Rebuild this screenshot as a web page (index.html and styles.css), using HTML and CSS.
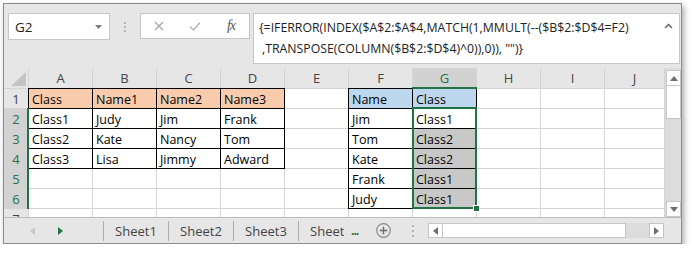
FILE: index.html
```html
<!DOCTYPE html>
<html lang="en">
<head>
  <meta charset="UTF-8">
  <title>Lookup Class</title>
  <link rel="stylesheet" href="styles.css">
</head>
<body>

  <div class="window">

    <div class="formula-bar">
      <div class="name-box">
        <span>G2</span>
        <svg width="7" height="4" viewBox="0 0 7 4"><polygon points="0,0 7,0 3.5,4" fill="#7a7a7a"/></svg>
      </div>
      <div class="grip"><i></i><i></i><i></i></div>
      <div class="fx-buttons">
        <span class="fx-btn">
          <svg width="10" height="10" viewBox="0 0 10 10"><path d="M1 1 L9 9 M9 1 L1 9" stroke="#a6a6a6" stroke-width="1.3" fill="none"/></svg>
        </span>
        <span class="fx-btn">
          <svg width="12" height="10" viewBox="0 0 12 10"><path d="M1 5.5 L4.5 9 L11 1.5" stroke="#b4b4b4" stroke-width="1.4" fill="none"/></svg>
        </span>
        <span class="fx-btn fx">fx</span>
      </div>
      <div class="formula">
        {=IFERROR(INDEX($A$2:$A$4,MATCH(1,MMULT(--($B$2:$D$4=F2)<br>
        <span class="indent">,TRANSPOSE(COLUMN($B$2:$D$4)^0)),0)), "")}</span>
        <svg class="collapse" width="9" height="6" viewBox="0 0 9 6"><path d="M1 5 L4.5 1.5 L8 5" stroke="#666" stroke-width="1.5" fill="none"/></svg>
      </div>
    </div>

    <div class="sheet">
      <div class="grid" id="grid">
        <!-- header + cells are built below -->
      </div>
      <div class="vscroll">
        <div class="sbtn">
          <svg width="8" height="5" viewBox="0 0 8 5"><polygon points="0,5 8,5 4,0" fill="#6e6e6e"/></svg>
        </div>
        <div class="vthumb"></div>
        <div class="vspace"></div>
        <div class="sbtn">
          <svg width="8" height="5" viewBox="0 0 8 5"><polygon points="0,0 8,0 4,5" fill="#6e6e6e"/></svg>
        </div>
      </div>
      <div class="col-mark"></div>
      <div class="row-mark"></div>
      <div class="selection"></div>
      <div class="fill-handle"></div>
    </div>

    <div class="tab-bar">
      <div class="nav">
        <svg width="5" height="8" viewBox="0 0 5 8"><polygon points="5,0 5,8 0,4" fill="#c8c8c8"/></svg>
        <svg width="5" height="8" viewBox="0 0 5 8"><polygon points="0,0 0,8 5,4" fill="#217346"/></svg>
      </div>
      <div class="sep"></div>
      <div class="tabs">
        <div class="tab">Sheet1</div>
        <div class="sep"></div>
        <div class="tab">Sheet2</div>
        <div class="sep"></div>
        <div class="tab">Sheet3</div>
        <div class="sep"></div>
        <div class="tab">Sheet4</div>
      </div>
      <div class="more">...</div>
      <div class="add">
        <svg width="15" height="15" viewBox="0 0 15 15">
          <circle cx="7.5" cy="7.5" r="6.8" stroke="#8a8a8a" stroke-width="1.2" fill="none"/>
          <path d="M7.5 3.8 V11.2 M3.8 7.5 H11.2" stroke="#6a6a6a" stroke-width="1.4"/>
        </svg>
      </div>
      <div class="grip small"><i></i><i></i><i></i></div>
      <div class="hscroll">
        <div class="sbtn">
          <svg width="5" height="8" viewBox="0 0 5 8"><polygon points="5,0 5,8 0,4" fill="#6e6e6e"/></svg>
        </div>
        <div class="hthumb"></div>
        <div class="hspace"></div>
        <div class="sbtn">
          <svg width="5" height="8" viewBox="0 0 5 8"><polygon points="0,0 0,8 5,4" fill="#6e6e6e"/></svg>
        </div>
      </div>
    </div>

  </div>

  <script>
    const cols = ["A", "B", "C", "D", "E", "F", "G", "H", "I", "J"];
    const rows = [
      ["Class", "Name1", "Name2", "Name3", "", "Name", "Class"],
      ["Class1", "Judy", "Jim", "Frank", "", "Jim", "Class1"],
      ["Class2", "Kate", "Nancy", "Tom", "", "Tom", "Class2"],
      ["Class3", "Lisa", "Jimmy", "Adward", "", "Kate", "Class2"],
      ["", "", "", "", "", "Frank", "Class1"],
      ["", "", "", "", "", "Judy", "Class1"],
      []
    ];

    function cellClass(r, c) {
      let cls = "cell";
      if ((r <= 4 && c <= 3) || (r <= 6 && (c === 5 || c === 6))) cls += " boxed";
      if (r === 1 && c <= 3) cls += " peach";
      if (r === 1 && (c === 5 || c === 6)) cls += " blue";
      if (c === 6 && r >= 3 && r <= 6) cls += " selected";
      return cls;
    }

    function renderGrid() {
      const grid = document.getElementById("grid");
      let html = `<div class="corner"><svg width="15" height="14" viewBox="0 0 15 14"><polygon points="15,0 15,14 0,14" fill="#c4c4c4"/></svg></div>`;
      cols.forEach((col, c) => {
        html += `<div class="colhead${c === 6 ? " active" : ""}">${col}</div>`;
      });
      rows.forEach((row, i) => {
        const r = i + 1;
        html += `<div class="rowhead${r >= 2 && r <= 6 ? " active" : ""}">${r}</div>`;
        cols.forEach((col, c) => {
          html += `<div class="${cellClass(r, c)}">${row[c] || ""}</div>`;
        });
      });
      grid.innerHTML = html;
    }

    renderGrid();
  </script>

</body>
</html>
```

FILE: styles.css
```css
body {
  margin: 0;
  background-color: #fff;
  font-family: "Open Sans", "Noto Sans", sans-serif;
  color: #222;
}

.window {
  margin: 3px 0 0 3px;
  width: 677px;
  height: 239px;
  border: 1px solid #8c8c8c;
  background-color: #e6e6e6;
  box-shadow: 2px 3px 6px rgba(0, 0, 0, 0.35);
  display: flex;
  flex-direction: column;
  overflow: hidden;
}

/* formula bar */

.formula-bar {
  height: 64px;
  flex-shrink: 0;
  display: flex;
  align-items: flex-start;
  padding-top: 9px;
  box-sizing: border-box;
}

.name-box {
  margin-left: 4px;
  width: 102px;
  height: 27px;
  box-sizing: border-box;
  border: 1px solid #c6c6c6;
  background-color: #fff;
  display: flex;
  align-items: center;
  justify-content: space-between;
  padding: 0 7px 0 6px;
  font-size: 13.5px;
}

.grip {
  width: 30px;
  height: 27px;
  display: flex;
  flex-direction: column;
  align-items: center;
  justify-content: center;
  gap: 2px;
}

.grip i {
  width: 2px;
  height: 2px;
  background-color: #b4b4b4;
}

.fx-buttons {
  width: 110px;
  height: 26px;
  box-sizing: border-box;
  border: 1px solid #c6c6c6;
  background-color: #fff;
  display: flex;
  align-items: center;
}

.fx-btn {
  width: 36px;
  display: flex;
  justify-content: center;
}

.fx-btn.fx {
  font-family: "Liberation Serif", serif;
  font-style: italic;
  font-size: 14px;
  color: #555;
  letter-spacing: -1px;
}

.formula {
  position: relative;
  margin-left: 3px;
  width: 427px;
  height: 51px;
  box-sizing: border-box;
  border: 1px solid #c6c6c6;
  background-color: #fff;
  padding: 3px 0 0 5px;
  font-size: 12.3px;
  line-height: 21px;
  white-space: nowrap;
  color: #222;
}

.formula .indent {
  padding-left: 3px;
}

.collapse {
  position: absolute;
  right: 6px;
  top: 9px;
}

/* sheet */

.sheet {
  position: relative;
  height: 149px;
  flex-shrink: 0;
  display: flex;
}

.grid {
  width: 660px;
  height: 149px;
  border-right: 1px solid #d4d4d4;
  display: grid;
  grid-template-columns: 24px repeat(9, 63px) 59px;
  grid-template-rows: 20px repeat(7, 19px);
  gap: 1px;
  background-color: #d4d4d4;
  overflow: hidden;
}

.corner {
  background-color: #e6e6e6;
  display: flex;
  align-items: flex-end;
  justify-content: flex-end;
  padding: 0 2px 2px 0;
}

.colhead, .rowhead {
  background-color: #e6e6e6;
  color: #444;
  font-size: 13px;
  display: flex;
  align-items: center;
  justify-content: center;
}

.colhead.active, .rowhead.active {
  background-color: #d2d2d2;
  color: #217346;
}

.cell {
  background-color: #fff;
  color: #000;
  font-size: 12.5px;
  line-height: 17px;
  padding: 0 3px;
  display: flex;
  align-items: flex-end;
  white-space: nowrap;
}

.cell.boxed {
  outline: 1px solid #000;
}

.cell.peach {
  background-color: #f8cbad;
}

.cell.blue {
  background-color: #bdd7ee;
}

.cell.selected {
  background-color: #c8c8c8;
}

.selection {
  position: absolute;
  left: 408px;
  top: 39px;
  width: 65px;
  height: 102px;
  box-sizing: border-box;
  border: 2px solid #217346;
}

.fill-handle {
  position: absolute;
  left: 469px;
  top: 137px;
  width: 5px;
  height: 5px;
  background-color: #217346;
  border: 1px solid #fff;
}

.col-mark {
  position: absolute;
  left: 408px;
  top: 19px;
  width: 65px;
  height: 2px;
  background-color: #217346;
}

.row-mark {
  position: absolute;
  left: 23px;
  top: 40px;
  width: 2px;
  height: 101px;
  background-color: #217346;
}

/* scroll bars */

.vscroll {
  width: 16px;
  display: flex;
  flex-direction: column;
  padding: 2px 0 0 1px;
  box-sizing: border-box;
  background-color: #dcdcdc;
}

.sbtn {
  width: 15px;
  height: 16px;
  box-sizing: border-box;
  border: 1px solid #c6c6c6;
  background-color: #fff;
  display: flex;
  align-items: center;
  justify-content: center;
  flex-shrink: 0;
}

.vthumb {
  width: 15px;
  height: 33px;
  box-sizing: border-box;
  border: 1px solid #c6c6c6;
  border-top: none;
  background-color: #fff;
}

.vspace, .hspace {
  flex: 1;
}

/* sheet tabs */

.tab-bar {
  height: 26px;
  flex-shrink: 0;
  border-top: 1px solid #bdbdbd;
  box-sizing: border-box;
  display: flex;
  align-items: center;
}

.nav {
  width: 99px;
  display: flex;
  gap: 23px;
  padding-left: 26px;
  box-sizing: border-box;
}

.sep {
  width: 1px;
  height: 20px;
  background-color: #acacac;
  flex-shrink: 0;
}

.tabs {
  width: 240px;
  display: flex;
  align-items: center;
  overflow: hidden;
  flex-shrink: 0;
}

.tab {
  width: 64px;
  flex-shrink: 0;
  text-align: center;
  font-size: 13px;
  color: #444;
}

.more {
  margin-left: 7px;
  width: 12px;
  color: #217346;
  font-weight: bold;
  font-size: 12px;
  letter-spacing: -1px;
}

.add {
  margin-left: 13px;
  display: flex;
}

.grip.small {
  margin-left: 21px;
  width: 2px;
  height: 14px;
  gap: 3px;
}

.hscroll {
  margin-left: 14px;
  width: 236px;
  height: 15px;
  display: flex;
  background-color: #dcdcdc;
}

.hscroll .sbtn {
  width: 15px;
  height: 15px;
}

.hthumb {
  width: 183px;
  height: 15px;
  box-sizing: border-box;
  border: 1px solid #c6c6c6;
  border-left: none;
  background-color: #fff;
}
```
